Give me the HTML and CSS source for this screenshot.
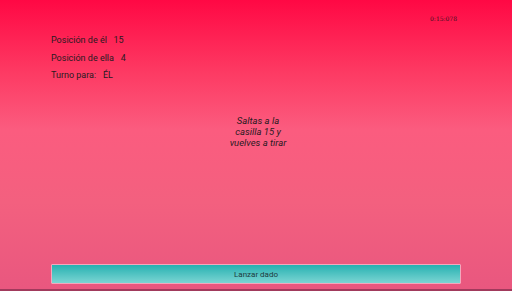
FILE: index.html
```html
<!DOCTYPE html>
<html lang="es">
<head>
    <meta charset="UTF-8">
    <meta name="viewport" content="width=device-width, initial-scale=1.0">
    <title>Juego</title>
    <link rel="stylesheet" href="styles.css">
</head>
<body>
    <div class="screen">
        <!-- Timer -->
        <div class="topbar">
            <span class="timer">0:15:078</span>
        </div>

        <!-- Estado -->
        <div class="status">
            <p>Posición de él&nbsp;&nbsp;&nbsp;15</p>
            <p>Posición de ella&nbsp;&nbsp;&nbsp;4</p>
            <p>Turno para:&nbsp;&nbsp;&nbsp;ÉL</p>
        </div>

        <!-- Mensaje -->
        <div class="message">
            <p>Saltas a la casilla 15 y vuelves a tirar</p>
        </div>

        <!-- Boton -->
        <div class="actions">
            <button class="roll">Lanzar dado</button>
        </div>
    </div>
</body>
</html>
```

FILE: styles.css
```css
/* Base */
html, body {
    margin: 0;
    padding: 0;
    height: 100%;
}

body {
    font-family: Roboto, 'Liberation Sans', sans-serif;
    color: #2a1a1f;
    overflow: hidden;
}

.screen {
    height: 291px;
    box-sizing: border-box;
    display: flex;
    flex-direction: column;
    background: linear-gradient(to bottom, #ff0844 0%, #fd3a63 25%, #fb5c7f 45%, #f3607f 70%, #e9577f 100%);
    border-bottom: 2px solid #a13a5c;
}

/* Timer */
.topbar {
    display: flex;
    justify-content: flex-end;
    padding: 15px 55px 0 0;
    height: 17px;
}

.timer {
    font-family: 'DejaVu Serif', serif;
    font-size: 6px;
    color: #3a1020;
}

/* Estado */
.status {
    padding: 0 0 0 51px;
}

.status p {
    margin: 0;
    font-size: 9px;
    line-height: 17.5px;
    white-space: pre;
}

/* Mensaje */
.message {
    flex: 1;
    display: flex;
    justify-content: center;
    padding-top: 30px;
}

.message p {
    margin: 0;
    width: 64px;
    text-align: center;
    font-style: italic;
    font-size: 9.5px;
    line-height: 11px;
    padding-left: 4px;
}

/* Boton */
.actions {
    padding: 0 51px 5px 51px;
}

.roll {
    width: 100%;
    height: 20px;
    display: block;
    border: 1px solid #f3a8bd;
    border-radius: 1px;
    background: linear-gradient(to bottom, #27b1b1, #7cd5d3);
    font-family: Roboto, 'Liberation Sans', sans-serif;
    font-size: 8px;
    color: #1e3a3c;
    padding: 0;
}
```
